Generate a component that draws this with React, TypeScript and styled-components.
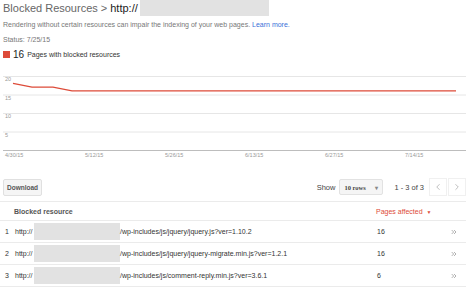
import React, { FC } from 'react'
import styled, { createGlobalStyle } from 'styled-components'
import { ChevronLeft, ChevronRight, ChevronsRight } from 'lucide-react'

const GlobalStyle = createGlobalStyle`
  html, body {
    margin: 0;
    padding: 0;
    background: #fff;
  }
  body {
    font-family: 'Liberation Sans', Arial, sans-serif;
    font-size: 7px;
    color: #333;
  }
`

type Row = { path: string; pages: number }

const ROWS: Row[] = [
  { path: '/wp-includes/js/jquery/jquery.js?ver=1.10.2', pages: 16 },
  { path: '/wp-includes/js/jquery/jquery-migrate.min.js?ver=1.2.1', pages: 16 },
  { path: '/wp-includes/js/comment-reply.min.js?ver=3.6.1', pages: 6 },
]

const X_LABELS = ['4/30/15', '5/12/15', '5/26/15', '6/13/15', '6/27/15', '7/14/15']
const Y_LABELS = [20, 15, 10, 5]

// 0 sits on the baseline (y=82 in the svg), each unit is 3.7px
const yFor = (v: number) => 82 - v * 3.7

const Chart: FC = () => {
  const points = [
    [13, 18],
    [32, 17],
    [53, 17],
    [72, 16],
    [456, 16],
  ]
  const d = points.map(([x, v], i) => `${i ? 'L' : 'M'}${x} ${yFor(v)}`).join(' ')
  return (
    <StyledChart width={474} height={96} viewBox="0 0 474 96">
      {Y_LABELS.map((v) => (
        <g key={v}>
          <line x1={3} x2={466} y1={yFor(v) + 0.5} y2={yFor(v) + 0.5} stroke="#e6e6e6" strokeWidth={1} />
          <text x={5} y={yFor(v) + 5} fontSize={5.5} fill="#999">
            {v}
          </text>
        </g>
      ))}
      <line x1={3} x2={466} y1={82.5} y2={82.5} stroke="#bdbdbd" strokeWidth={1} />
      <path d={d} fill="none" stroke="#dd4b39" strokeWidth={1.3} />
      {X_LABELS.map((label, i) => (
        <text key={label} x={5 + i * 80} y={89} fontSize={5.5} fill="#999">
          {label}
        </text>
      ))}
    </StyledChart>
  )
}

export default function App() {
  return (
    <>
      <GlobalStyle />
      <StyledPage>
        <StyledTitle>
          <span>Blocked Resources &gt;</span>
          <StyledTitleUrl>http://</StyledTitleUrl>
          <StyledMask width={129} height={16} />
        </StyledTitle>
        <StyledDescription>
          Rendering without certain resources can impair the indexing of your web pages.{' '}
          <StyledLink href="#">Learn more.</StyledLink>
        </StyledDescription>
        <StyledStatus>Status: 7/25/15</StyledStatus>
        <StyledSummary>
          <StyledSwatch />
          <StyledCount>16</StyledCount>
          <span>Pages with blocked resources</span>
        </StyledSummary>
        <Chart />
        <StyledToolbar>
          <StyledButton>Download</StyledButton>
          <StyledControls>
            <span>Show</span>
            <StyledSelect>
              <span>10 rows</span>
              <StyledCaret>▾</StyledCaret>
            </StyledSelect>
            <StyledRange>1 - 3 of 3</StyledRange>
            <StyledPager>
              <StyledPageButton>
                <ChevronLeft size={10} strokeWidth={1.5} />
              </StyledPageButton>
              <StyledPageButton>
                <ChevronRight size={10} strokeWidth={1.5} />
              </StyledPageButton>
            </StyledPager>
          </StyledControls>
        </StyledToolbar>
        <StyledTable>
          <StyledHeaderRow>
            <StyledHeaderCell>Blocked resource</StyledHeaderCell>
            <StyledSortCell>
              Pages affected <StyledSortArrow>▼</StyledSortArrow>
            </StyledSortCell>
            <span />
          </StyledHeaderRow>
          {ROWS.map((row, i) => (
            <StyledRow key={row.path}>
              <StyledIndex>{i + 1}</StyledIndex>
              <StyledResource>
                <span>http://</span>
                <StyledMask width={86} height={17} />
                <span>{row.path}</span>
              </StyledResource>
              <StyledPages>{row.pages}</StyledPages>
              <StyledAction>
                <ChevronsRight size={8} strokeWidth={1.4} />
              </StyledAction>
            </StyledRow>
          ))}
        </StyledTable>
      </StyledPage>
    </>
  )
}

const StyledPage = styled.div`
  width: 466px;
  display: flex;
  flex-direction: column;
`

const StyledTitle = styled.div`
  height: 17px;
  padding-left: 3px;
  display: flex;
  align-items: flex-start;
  font-size: 11px;
  line-height: 17px;
  color: #666;
  white-space: nowrap;
`

const StyledTitleUrl = styled.span`
  margin-left: 3px;
  margin-right: 2px;
  color: #222;
`

const StyledMask = styled.span<{ width: number; height: number }>`
  display: inline-block;
  flex: none;
  width: ${({ width }) => width}px;
  height: ${({ height }) => height}px;
  background: #e2e2e2;
`

const StyledDescription = styled.div`
  margin-top: 4px;
  padding-left: 3px;
  line-height: 8px;
  color: #777;
  white-space: nowrap;
`

const StyledLink = styled.a`
  color: #3b6fd8;
  text-decoration: none;
`

const StyledStatus = styled.div`
  margin-top: 7px;
  padding-left: 3px;
  line-height: 8px;
  color: #777;
`

const StyledSummary = styled.div`
  margin-top: 5px;
  height: 10px;
  padding-left: 3px;
  display: flex;
  align-items: center;
  color: #333;
`

const StyledSwatch = styled.span`
  width: 7px;
  height: 7px;
  background: #dd4b39;
  margin-right: 3px;
`

const StyledCount = styled.span`
  font-size: 10px;
  color: #222;
  margin-right: 3px;
`

const StyledChart = styled.svg`
  display: block;
  margin-top: 9px;
  font-family: 'Liberation Sans', Arial, sans-serif;
`

const StyledToolbar = styled.div`
  margin-top: 14px;
  padding-left: 3px;
  display: flex;
  align-items: center;
  justify-content: space-between;
`

const StyledButton = styled.div`
  width: 37px;
  height: 15px;
  display: flex;
  align-items: center;
  justify-content: center;
  background: #f5f5f5;
  border: 1px solid #e0e0e0;
  border-radius: 2px;
  font-weight: bold;
  color: #555;
  font-size: 6.5px;
`

const StyledControls = styled.div`
  display: flex;
  align-items: center;
  color: #444;
  font-size: 7.5px;
`

const StyledSelect = styled.div`
  margin-left: 4px;
  width: 44px;
  height: 16px;
  padding: 0 4px;
  box-sizing: border-box;
  display: flex;
  align-items: center;
  justify-content: space-between;
  background: #f5f5f5;
  border: 1px solid #e2e2e2;
  border-radius: 2px;
  font-family: 'Liberation Serif', 'Times New Roman', serif;
  font-weight: bold;
  font-size: 6.5px;
  color: #444;
`

const StyledCaret = styled.span`
  font-family: 'Liberation Sans', Arial, sans-serif;
  color: #888;
  font-size: 6px;
`

const StyledRange = styled.span`
  margin-left: 11px;
`

const StyledPager = styled.div`
  margin-left: 5px;
  display: flex;
`

const StyledPageButton = styled.div`
  width: 16px;
  height: 16px;
  display: flex;
  align-items: center;
  justify-content: center;
  border: 1px solid #f0f0f0;
  color: #999;
  & + & {
    margin-left: 1px;
  }
`

const StyledTable = styled.div`
  margin-top: 5px;
  display: flex;
  flex-direction: column;
`

const StyledHeaderRow = styled.div`
  height: 18px;
  display: grid;
  grid-template-columns: 376px 74px 16px;
  align-items: center;
  border-top: 1px solid #ebebeb;
  border-bottom: 1px solid #ebebeb;
`

const StyledHeaderCell = styled.span`
  padding-left: 14px;
  font-weight: bold;
  color: #555;
`

const StyledSortCell = styled.span`
  color: #dd4b39;
`

const StyledSortArrow = styled.span`
  font-size: 5px;
  margin-left: 2px;
`

const StyledRow = styled.div`
  height: 21px;
  display: grid;
  grid-template-columns: 15px 361px 74px 16px;
  align-items: center;
  border-bottom: 1px solid #ebebeb;
  color: #333;
`

const StyledIndex = styled.span`
  padding-left: 5px;
`

const StyledResource = styled.span`
  display: flex;
  align-items: center;
  white-space: nowrap;

  & > span:first-child {
    width: 19px;
  }
`

const StyledPages = styled.span`
  padding-left: 1px;
`

const StyledAction = styled.span`
  display: flex;
  align-items: center;
  color: #555;
`
